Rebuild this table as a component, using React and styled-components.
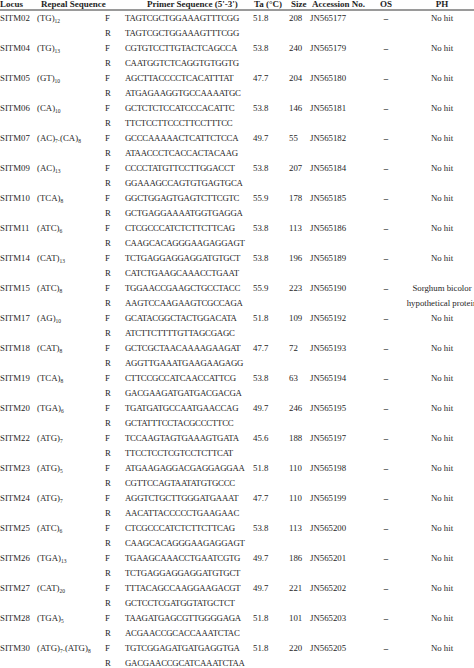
import styled, { createGlobalStyle } from "styled-components";

const GlobalStyle = createGlobalStyle`
  html, body {
    margin: 0;
    padding: 0;
    background: #fff;
    overflow: hidden;
  }
  body {
    font-family: "Liberation Serif", "Times New Roman", serif;
    color: #1f1f1f;
  }
`;

const cols = "37px 68px 20px 128px 36px 21px 62px 28px 84px";

const Table = styled.div`
  width: 484px;
  font-size: 8.8px;
`;

const HeadRow = styled.div`
  display: grid;
  grid-template-columns: ${cols};
  height: 9px;
  line-height: 8px;
  border-bottom: 2px solid #9a9a9a;
  font-weight: bold;
  font-size: 9px;
`;

const HeadCell = styled.div`
  white-space: nowrap;
  padding-left: ${(p) => p.$pad || 0}px;
  margin-left: ${(p) => p.$shift || 0}px;
  grid-column: ${(p) => p.$span || "auto"};
  text-align: ${(p) => (p.$center ? "center" : "left")};
`;

const Row = styled.div`
  display: grid;
  grid-template-columns: ${cols};
  height: 15px;
  line-height: 15px;
`;

const Cell = styled.div`
  white-space: nowrap;
  display: flex;
  justify-content: ${(p) => (p.$center ? "center" : "flex-start")};
`;

const Primer = styled(Cell)`
  letter-spacing: -0.25px;
`;

const Dash = styled.span`
  font-weight: bold;
`;

const Sub = styled.sub`
  font-size: 5.5px;
  vertical-align: -1.5px;
`;

const Repeat = ({ parts }) => (
  <>
    {parts.map(([motif, n], i) => (
      <span key={i}>
        {i > 0 ? "." : ""}
        {motif}
        <Sub>{n}</Sub>
      </span>
    ))}
  </>
);

const data = [
  ["SITM02", [["(TG)", "12"]], "TAGTCGCTGGAAAGTTTCGG", "TAGTCGCTGGAAAGTTTCGG", "51.8", "208", "JN565177"],
  ["SITM04", [["(TG)", "13"]], "CGTGTCCTTGTACTCAGCCA", "CAATGGTCTCAGGTGTGGTG", "53.8", "240", "JN565179"],
  ["SITM05", [["(GT)", "10"]], "AGCTTACCCCTCACATTTAT", "ATGAGAAGGTGCCAAAATGC", "47.7", "204", "JN565180"],
  ["SITM06", [["(CA)", "10"]], "GCTCTCTCCATCCCACATTC", "TTCTCCTTCCCTTCCTTTCC", "53.8", "146", "JN565181"],
  ["SITM07", [["(AC)", "7"], ["(CA)", "8"]], "GCCCAAAAACTCATTCTCCA", "ATAACCCTCACCACTACAAG", "49.7", "55", "JN565182"],
  ["SITM09", [["(AC)", "13"]], "CCCCTATGTTCCTTGGACCT", "GGAAAGCCAGTGTGAGTGCA", "53.8", "207", "JN565184"],
  ["SITM10", [["(TCA)", "8"]], "GGCTGGAGTGAGTCTTCGTC", "GCTGAGGAAAATGGTGAGGA", "55.9", "178", "JN565185"],
  ["SITM11", [["(ATC)", "6"]], "CTCGCCCATCTCTTCTTCAG", "CAAGCACAGGGAAGAGGAGT", "53.8", "113", "JN565186"],
  ["SITM14", [["(CAT)", "13"]], "TCTGAGGAGGAGGATGTGCT", "CATCTGAAGCAAACCTGAAT", "53.8", "196", "JN565189"],
  ["SITM15", [["(ATC)", "8"]], "TGGAACCGAAGCTGCCTACC", "AAGTCCAAGAAGTCGCCAGA", "55.9", "223", "JN565190", "Sorghum bicolor", "hypothetical protein"],
  ["SITM17", [["(AG)", "10"]], "GCATACGGCTACTGGACATA", "ATCTTCTTTTGTTAGCGAGC", "51.8", "109", "JN565192"],
  ["SITM18", [["(CAT)", "8"]], "GCTCGCTAACAAAAGAAGAT", "AGGTTGAAATGAAGAAGAGG", "47.7", "72", "JN565193"],
  ["SITM19", [["(TCA)", "8"]], "CTTCCGCCATCAACCATTCG", "GACGAAGATGATGACGACGA", "53.8", "63", "JN565194"],
  ["SITM20", [["(TGA)", "6"]], "TGATGATGCCAATGAACCAG", "GCTATTTCCTACGCCCTTCC", "49.7", "246", "JN565195"],
  ["SITM22", [["(ATG)", "7"]], "TCCAAGTAGTGAAAGTGATA", "TTCCTCCTCGTCCTCTTCAT", "45.6", "188", "JN565197"],
  ["SITM23", [["(ATG)", "5"]], "ATGAAGAGGACGAGGAGGAA", "CGTTCCAGTAATATGTGCCC", "51.8", "110", "JN565198"],
  ["SITM24", [["(ATG)", "7"]], "AGGTCTGCTTGGGATGAAAT", "AACATTACCCCCTGAAGAAC", "47.7", "110", "JN565199"],
  ["SITM25", [["(ATC)", "6"]], "CTCGCCCATCTCTTCTTCAG", "CAAGCACAGGGAAGAGGAGT", "53.8", "113", "JN565200"],
  ["SITM26", [["(TGA)", "13"]], "TGAAGCAAACCTGAATCGTG", "TCTGAGGAGGAGGATGTGCT", "49.7", "186", "JN565201"],
  ["SITM27", [["(CAT)", "20"]], "TTTACAGCCAAGGAAGACGT", "GCTCCTCGATGGTATGCTCT", "49.7", "221", "JN565202"],
  ["SITM28", [["(TGA)", "5"]], "TAAGATGAGCGTTGGGGAGA", "ACGAACCGCACCAAATCTAC", "51.8", "101", "JN565203"],
  ["SITM30", [["(ATG)", "7"], ["(ATG)", "8"]], "TGTCGGAGATGATGAGGTGA", "GACGAACCGCATCAAATCTAA", "51.8", "220", "JN565205"],
];

export default function App() {
  return (
    <>
      <GlobalStyle />
      <Table>
        <HeadRow>
          <HeadCell>Locus</HeadCell>
          <HeadCell $pad={4}>Repeal Sequence</HeadCell>
          <HeadCell $span="span 2" $pad={42}>
            Primer Sequence (5'-3')
          </HeadCell>
          <HeadCell $pad={1}>Ta (°C)</HeadCell>
          <HeadCell $pad={2}>Size</HeadCell>
          <HeadCell $pad={2}>Accession No.</HeadCell>
          <HeadCell $center>OS</HeadCell>
          <HeadCell $center>PH</HeadCell>
        </HeadRow>
        {data.map(([locus, rep, fwd, rev, ta, size, acc, ph1, ph2]) => (
          <div key={locus}>
            <Row>
              <Cell>{locus}</Cell>
              <Cell>
                <span>
                  <Repeat parts={rep} />
                </span>
              </Cell>
              <Cell>F</Cell>
              <Primer>{fwd}</Primer>
              <Cell>{ta}</Cell>
              <Cell>{size}</Cell>
              <Cell>{acc}</Cell>
              <Cell $center>
                <Dash>–</Dash>
              </Cell>
              <Cell $center>{ph1 || "No hit"}</Cell>
            </Row>
            <Row>
              <Cell />
              <Cell />
              <Cell>R</Cell>
              <Primer>{rev}</Primer>
              <Cell />
              <Cell />
              <Cell />
              <Cell />
              <Cell $center>{ph2 || ""}</Cell>
            </Row>
          </div>
        ))}
      </Table>
    </>
  );
}
